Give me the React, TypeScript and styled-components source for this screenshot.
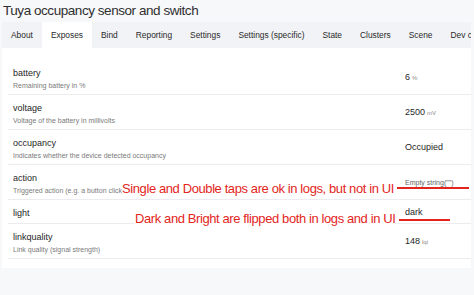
import React from "react";
import styled, { createGlobalStyle } from "styled-components";

const Global = createGlobalStyle`
  html, body { margin: 0; padding: 0; }
  body {
    background: #f7f8fa;
    font-family: "Liberation Sans", Arial, sans-serif;
    color: #333;
    width: 474px;
    height: 295px;
    overflow: hidden;
  }
`;

const Page = styled.div`
  display: flex;
  flex-direction: column;
  width: 474px;
  height: 295px;
`;

const Title = styled.h1`
  margin: 0;
  height: 22px;
  line-height: 22px;
  padding-left: 3px;
  font-size: 13.5px;
  letter-spacing: -0.45px;
  font-weight: normal;
  color: #2f2f2f;
`;

const TabBar = styled.nav`
  display: flex;
  margin: 0 3px 0 2px;
  height: 26px;
  background: #f2f3f7;
  overflow: hidden;
`;

const Tab = styled.div<{ $active?: boolean }>`
  display: flex;
  align-items: center;
  padding: 0 9px;
  font-size: 8.4px;
  color: #2a2a2a;
  white-space: nowrap;
  background: ${(p) => (p.$active ? "#ffffff" : "transparent")};
`;

const Card = styled.section`
  position: relative;
  margin: 0 3px 0 2px;
  height: 220px;
  background: #ffffff;
  padding: 12px 0 0 6px;
  box-sizing: border-box;
`;

const Row = styled.div<{ $compact?: boolean }>`
  display: grid;
  grid-template-columns: 392px 1fr;
  align-items: center;
  padding: 8px 0 5px 5px;
  border-bottom: 1px solid #ececf0;
  box-sizing: border-box;
  height: ${(p) => (p.$compact ? "24px" : "35px")};
`;

const Info = styled.div`
  display: flex;
  flex-direction: column;
  align-self: start;
  gap: 2px;
`;

const Name = styled.div`
  font-size: 9px;
  line-height: 11px;
  color: #262626;
`;

const Desc = styled.div`
  font-size: 7px;
  line-height: 9px;
  color: #7a7a7a;
  white-space: nowrap;
`;

const Value = styled.div<{ $small?: boolean }>`
  font-size: ${(p) => (p.$small ? "7px" : "9px")};
  color: ${(p) => (p.$small ? "#666" : "#262626")};
  white-space: nowrap;
  margin-top: -4px;
`;

const Unit = styled.span`
  font-size: 6px;
  color: #8a8a8a;
  margin-left: 2px;
`;

const Note = styled.div<{ $x: number; $y: number }>`
  position: absolute;
  left: ${(p) => p.$x}px;
  top: ${(p) => p.$y}px;
  font-size: 13px;
  line-height: 15px;
  letter-spacing: -0.4px;
  color: #e3261d;
  background: #ffffff;
  white-space: nowrap;
`;

const Strike = styled.div<{ $x: number; $y: number; $w: number }>`
  position: absolute;
  left: ${(p) => p.$x}px;
  top: ${(p) => p.$y}px;
  width: ${(p) => p.$w}px;
  height: 2px;
  background: #e3261d;
`;

const tabs = [
  "About",
  "Exposes",
  "Bind",
  "Reporting",
  "Settings",
  "Settings (specific)",
  "State",
  "Clusters",
  "Scene",
  "Dev console",
];

type Item = { name: string; desc?: string; value: string; unit?: string; small?: boolean };

const items: Item[] = [
  { name: "battery", desc: "Remaining battery in %", value: "6", unit: "%" },
  { name: "voltage", desc: "Voltage of the battery in millivolts", value: "2500", unit: "mV" },
  { name: "occupancy", desc: "Indicates whether the device detected occupancy", value: "Occupied" },
  { name: "action", desc: "Triggered action (e.g. a button click)", value: 'Empty string("")', small: true },
  { name: "light", value: "dark" },
  { name: "linkquality", desc: "Link quality (signal strength)", value: "148", unit: "lqi" },
];

export default function App() {
  return (
    <Page>
      <Global />
      <Title>Tuya occupancy sensor and switch</Title>
      <TabBar>
        {tabs.map((t) => (
          <Tab key={t} $active={t === "Exposes"}>
            {t}
          </Tab>
        ))}
      </TabBar>
      <Card>
        {items.map((it) => (
          <Row key={it.name} $compact={!it.desc}>
            <Info>
              <Name>{it.name}</Name>
              {it.desc && <Desc>{it.desc}</Desc>}
            </Info>
            <Value $small={it.small}>
              {it.value}
              {it.unit && <Unit>{it.unit}</Unit>}
            </Value>
          </Row>
        ))}
        <Note $x={120} $y={133}>Single and Double taps are ok in logs, but not in UI</Note>
        <Strike $x={395} $y={139} $w={72} />
        <Note $x={133} $y={163}>Dark and Bright are flipped both in logs and in UI</Note>
        <Strike $x={397} $y={171} $w={51} />
      </Card>
    </Page>
  );
}
